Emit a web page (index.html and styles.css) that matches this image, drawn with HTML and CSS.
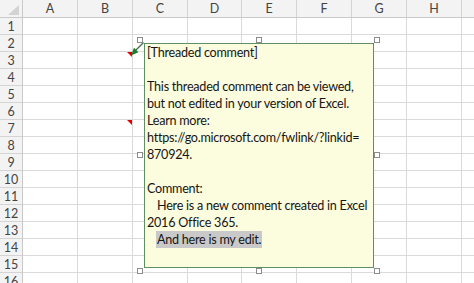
FILE: index.html
```html
<!DOCTYPE html>
<html>
<head>
<meta charset="utf-8">
<link rel="stylesheet" href="styles.css">
</head>
<body>
<div class="sheet">
  <div class="corner"><span class="corner-tri"></span></div>
  <div class="col-heads">
    <div class="ch w55">A</div>
    <div class="ch w55">B</div>
    <div class="ch w55">C</div>
    <div class="ch w54">D</div>
    <div class="ch w55">E</div>
    <div class="ch w55">F</div>
    <div class="ch w55">G</div>
    <div class="ch w55">H</div>
    <div class="ch wrest"></div>
  </div>
  <div class="row-heads">
    <div class="rh">1</div><div class="rh">2</div><div class="rh">3</div><div class="rh">4</div>
    <div class="rh">5</div><div class="rh">6</div><div class="rh">7</div><div class="rh">8</div>
    <div class="rh">9</div><div class="rh">10</div><div class="rh">11</div><div class="rh">12</div>
    <div class="rh">13</div><div class="rh">14</div><div class="rh">15</div><div class="rh">16</div>
  </div>
  <div class="cells">
    <div class="col w55"></div>
    <div class="col w55"></div>
    <div class="col w55"></div>
    <div class="col w54"></div>
    <div class="col w55"></div>
    <div class="col w55"></div>
    <div class="col w55"></div>
    <div class="col w55"></div>
    <div class="col wrest"></div>
  </div>
</div>

<svg class="marks" width="474" height="283" viewBox="0 0 474 283">
  <polygon points="127,52 132,52 132,57" fill="#e00000"/>
  <polygon points="127,120 132,120 132,125" fill="#e00000"/>
  <line x1="135.5" y1="50.5" x2="143.5" y2="42.5" stroke="#3f6f45" stroke-width="1.2"/>
  <polygon points="131,55.5 138.4,52.2 134,47.8" fill="#1e7a2e"/>
</svg>

<div class="comment">
  <div class="line">[Threaded comment]</div>
  <div class="line"></div>
  <div class="line">This threaded comment can be viewed,</div>
  <div class="line">but not edited in your version of Excel.</div>
  <div class="line">Learn more:</div>
  <div class="line">https://go.microsoft.com/fwlink/?linkid=</div>
  <div class="line">870924.</div>
  <div class="line"></div>
  <div class="line">Comment:</div>
  <div class="line indent">Here is a new comment created in Excel</div>
  <div class="line">2016 Office 365.</div>
  <div class="line indent-hl"><span class="hl">And here is my edit.</span></div>
</div>

<span class="handle h-tl"></span>
<span class="handle h-tm"></span>
<span class="handle h-tr"></span>
<span class="handle h-ml"></span>
<span class="handle h-mr"></span>
<span class="handle h-bl"></span>
<span class="handle h-bm"></span>
<span class="handle h-br"></span>
</body>
</html>
```
FILE: styles.css
```css
html, body {
  margin: 0;
  padding: 0;
  background: #ffffff;
  width: 474px;
  height: 283px;
  overflow: hidden;
  position: relative;
}

.sheet {
  display: grid;
  grid-template-columns: 23px 451px;
  grid-template-rows: 18px 265px;
  font-family: Lato, "Liberation Sans", sans-serif;
}

.corner {
  background: #f3f3f3;
  border-right: 1px solid #c9c9c9;
  border-bottom: 1px solid #c9c9c9;
  box-sizing: border-box;
  position: relative;
}

.corner-tri {
  position: absolute;
  right: 3px;
  bottom: 2px;
  width: 0;
  height: 0;
  border-left: 11px solid transparent;
  border-bottom: 10px solid #d3d3d3;
}

.col-heads {
  display: flex;
  background: #f3f3f3;
  border-bottom: 1px solid #c9c9c9;
  box-sizing: border-box;
}

.ch {
  box-sizing: border-box;
  border-right: 1px solid #d4d4d4;
  display: flex;
  align-items: center;
  justify-content: center;
  font-size: 12.5px;
  color: #444444;
  height: 17px;
}

.w55 { width: 55px; flex: none; }
.w54 { width: 54px; flex: none; }
.wrest { flex: 1; border-right: none; }

.row-heads {
  display: flex;
  flex-direction: column;
  background: #f3f3f3;
  border-right: 1px solid #c9c9c9;
  box-sizing: border-box;
}

.rh {
  height: 17px;
  box-sizing: border-box;
  border-bottom: 1px solid #d4d4d4;
  display: flex;
  align-items: center;
  justify-content: center;
  font-size: 12.5px;
  color: #444444;
  flex: none;
}

.cells {
  display: flex;
}

.col {
  box-sizing: border-box;
  border-right: 1px solid #dadada;
  background: repeating-linear-gradient(to bottom, transparent 0, transparent 16px, #dadada 16px, #dadada 17px);
}

.col.wrest { border-right: none; }

.marks {
  position: absolute;
  left: 0;
  top: 0;
  pointer-events: none;
}

.comment {
  position: absolute;
  left: 144px;
  top: 43px;
  width: 230px;
  height: 225px;
  box-sizing: border-box;
  border: 1px solid #5f8f62;
  background: #fcfcde;
  padding: 0 0 0 2px;
  font-family: Lato, "Liberation Sans", sans-serif;
  font-size: 12.6px;
  letter-spacing: -0.25px;
  line-height: 17px;
  color: #161616;
  white-space: nowrap;
}

.line {
  height: 17px;
}

.indent {
  padding-left: 10px;
}

.indent-hl {
  padding-left: 9px;
}

.hl {
  display: inline-block;
  background: #c9c9c9;
  padding: 0 1px;
  line-height: 17px;
}

.handle {
  position: absolute;
  width: 6px;
  height: 6px;
  box-sizing: border-box;
  border: 1px solid #8c8c8c;
  background: #ffffff;
}

.h-tl { left: 137px; top: 37px; }
.h-tm { left: 256px; top: 37px; }
.h-tr { left: 374px; top: 37px; }
.h-ml { left: 137px; top: 152px; }
.h-mr { left: 374px; top: 152px; }
.h-bl { left: 137px; top: 268px; }
.h-bm { left: 256px; top: 268px; }
.h-br { left: 374px; top: 268px; }
```
